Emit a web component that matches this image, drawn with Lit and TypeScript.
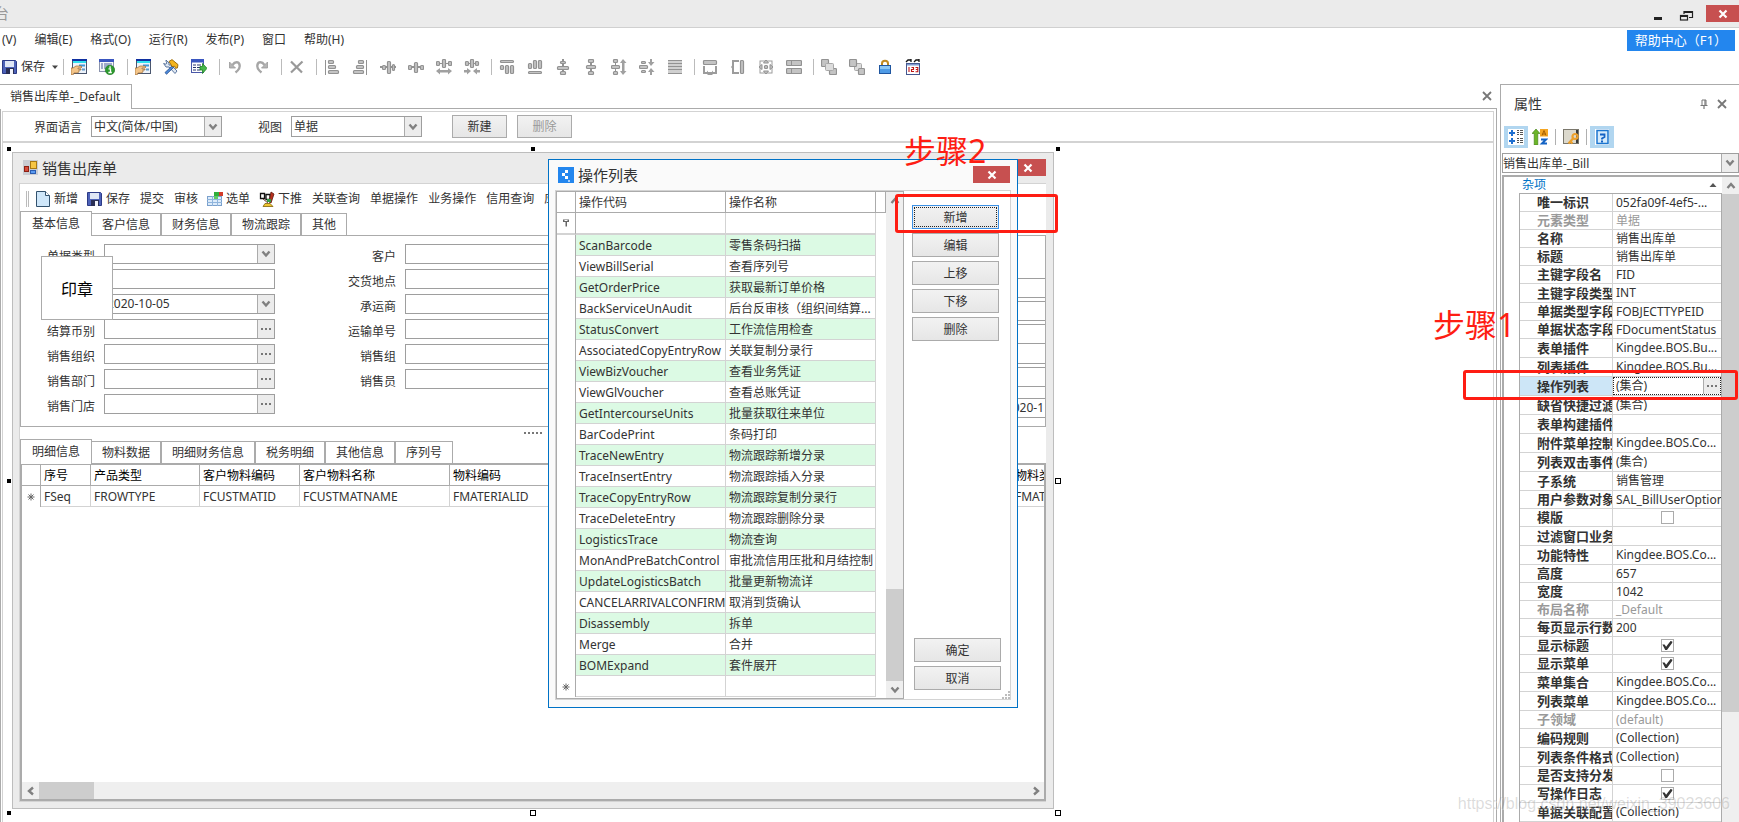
import { LitElement, html, css, svg, nothing, TemplateResult, SVGTemplateResult } from "lit";
import { customElement, property } from "lit/decorators.js";
import { classMap } from "lit/directives/class-map.js";

/* ---------- icon drawings, all on a 16 x 16 grid ---------- */

const g = (x: number, y: number, w: number, h: number) =>
  svg`<rect x=${x + 0.5} y=${y + 0.5} width=${w - 1} height=${h - 1} rx="1" fill="#c4c4c4" stroke="#929292" stroke-width="1.2"/>`;
const bar = (x: number, y: number, w: number, h: number) =>
  svg`<rect x=${x} y=${y} width=${w} height=${h} fill="#929292"/>`;

const formBase = svg`<rect x="1.5" y="0.5" width="14" height="14" fill="#eef3fa" stroke="#4a566e"/>
  <rect x="1" y="0" width="15" height="2" fill="#1030a0"/><rect x="2" y="2" width="13" height="2" fill="#2fe0ee"/>`;

const ICONS: Record<string, SVGTemplateResult> = {
  save: svg`<path d="M0.5 1.5h13l1 1v12h-14z" fill="#4d62b8" stroke="#2c3a86"/><rect x="3" y="2" width="9" height="6" fill="#dfe6f5"/><rect x="4" y="9" width="8" height="6" fill="#2a2f55"/><rect x="8" y="10" width="3" height="5" fill="#f2f4fb"/>`,
  formHand: svg`${formBase}<rect x="8" y="5.500" width="6" height="2" fill="#3f97d8"/><rect x="11" y="9.500" width="3" height="2" fill="#5c9aca"/>
    <path d="M0 9h2l3-2h5l1 1-1 1H7v1h3v1H8v2l-2 1H3l-1 2H0z" fill="#f3c488" stroke="#9a6a38" stroke-width=".7"/>`,
  formInfo: svg`<rect x="0.5" y="0.5" width="14" height="12" fill="#f4f6fa" stroke="#8a93ad"/><rect x="0" y="0" width="15" height="3" fill="#3a56c0"/>
    <path d="M2 5h2M2 7h2M2 9h2M5 5h8M5 7h5M5 9h3" stroke="#4a5f9c"/><circle cx="11" cy="11" r="4.7" fill="#2c9a2e" stroke="#16701a" stroke-width=".6"/><path d="M9.5 9.8h2v3.6M9.4 13.5h3.4" stroke="#fff" stroke-width="1.3" fill="none"/><rect x="10.3" y="7.4" width="1.6" height="1.4" fill="#fff"/>`,
  tools: svg`<path d="M3 1l3 3v2h2l6 6-2 2.5-6-6.500H3L.6 4.500 3 5.200 4 4 3.200 3z" fill="#dfe8f2" stroke="#4d6a96" stroke-width=".9"/>
    <path d="M9 7L2 13.500 3.500 15.300 10.500 8.500z" fill="#4b88d8" stroke="#28508f" stroke-width=".8"/><path d="M6 2.500L9 .6l6 5-.6 3.400-2 .3-.6-2L9 7.600 7.600 5z" fill="#f4b51e" stroke="#946407" stroke-width=".9"/>`,
  formGo: svg`<rect x="0.5" y="0.500" width="12" height="13" fill="#fff" stroke="#4a58a8"/><rect x="0" y="0" width="13" height="3.500" fill="#3a56c0"/>
    <path d="M2 6h3M2 8.500h3M2 11h3M6 6h4M6 8.500h3M6 11h3" stroke="#26356e"/><path d="M9 7.500h2.500V4.500L16 9.300 11.500 14.500V11H9z" fill="#46b749" stroke="#1d7d24" stroke-width=".8"/>`,
  undo: svg`<path d="M2.500 3v6h6z" fill="#b4b4b4" stroke="#9a9a9a" stroke-width=".8"/><path d="M5.500 6C8 2.500 11.500 2.500 12.500 5.500S11 11.500 8.500 13.500" fill="none" stroke="#a6a6a6" stroke-width="2.400"/>`,
  redo: svg`<path d="M13.500 3v6h-6z" fill="#b4b4b4" stroke="#9a9a9a" stroke-width=".8"/><path d="M10.500 6C8 2.500 4.500 2.500 3.500 5.500S5 11.500 7.500 13.500" fill="none" stroke="#a6a6a6" stroke-width="2.400"/>`,
  cross: svg`<path d="M2 2.500l11 11M13.500 2.500L2 13.500" stroke="#999" stroke-width="2.200" fill="none"/>`,
  alLeft: svg`${bar(1, 1, 1, 15)}${g(4, 1, 6, 4)}${g(4, 6, 8, 4)}${g(4, 11, 11, 4)}`,
  alRight: svg`${bar(14, 1, 1, 15)}${g(6, 1, 6, 4)}${g(4, 6, 8, 4)}${g(1, 11, 11, 4)}`,
  alCenterV: svg`${bar(0, 7, 16, 2)}${g(2, 6, 4, 5)}${g(7, 2, 4, 13)}${g(12, 5, 3, 7)}`,
  alMidV: svg`${bar(0, 7, 16, 2)}${g(0, 6, 4, 5)}${g(6, 3, 4, 11)}${g(12, 6, 4, 5)}`,
  spaceH: svg`${bar(0, 4, 16, 1)}${g(0, 2, 4, 5)}${g(6, 0, 4, 9)}${g(12, 2, 4, 5)}<path d="M0 12l4-3v2h8V9l4 3-4 3.500V13.500H4v2z" fill="#a0a0a0"/>`,
  spaceHMin: svg`${bar(1, 4, 14, 1)}${g(1, 2, 4, 5)}${g(6, 0, 4, 9)}${g(11, 2, 4, 5)}<path d="M0 11h3V9l4 3-4 3.500V13.500H0zM16 11h-3V9l-4 3 4 3.500V13.500h3z" fill="#a0a0a0"/>`,
  alTop: svg`${g(1, 1, 14, 3)}${g(1, 6, 4, 5)}${g(6, 6, 4, 9)}${g(11, 6, 4, 9)}`,
  alBottom: svg`${g(1, 12, 14, 3)}${g(1, 4, 4, 6)}${g(6, 1, 4, 9)}${g(11, 1, 4, 9)}`,
  alMidH: svg`${bar(7, 0, 2, 16)}${g(5, 2, 6, 3)}${g(2, 7, 12, 4)}${g(5, 12, 6, 4)}`,
  alMidH2: svg`${bar(7, 0, 2, 16)}${g(5, 0, 6, 4)}${g(3, 6, 10, 4)}${g(5, 12, 6, 4)}`,
  spaceV: svg`${bar(4, 0, 1, 16)}${g(2, 0, 5, 4)}${g(0, 6, 9, 4)}${g(2, 12, 5, 4)}<path d="M12 0l3.500 4H13.500v8H15.500L12 16 9 12h2V4H9z" fill="#a0a0a0"/>`,
  spaceVMin: svg`${g(2, 2, 5, 3)}${g(0, 6, 9, 4)}${g(2, 11, 5, 3)}<path d="M11 0h2v3h2.500L12 7 9 3h2zM11 16h2v-3h2.500L12 9 9 13h2z" fill="#a0a0a0"/>`,
  lines: svg`<rect x="1" y="1" width="14" height="14" fill="#d0d0d0"/>${bar(1, 1, 14, 1)}${bar(1, 4, 14, 1)}${bar(1, 7, 14, 1)}${bar(1, 10, 14, 1)}${bar(1, 14, 14, 1)}`,
  sameW: svg`${g(1, 1, 14, 5)}<path d="M2 7v7h12V7" fill="none" stroke="#9c9c9c" stroke-width="2"/><path d="M4 14l2-2.500v1.500h4v-1.500L12 14l-2 2H6z" fill="#9c9c9c"/>`,
  sameH: svg`${g(10, 1, 4, 14)}<path d="M9 2H3v12h6" fill="none" stroke="#9c9c9c" stroke-width="2"/><path d="M1 8l3-4v8z" fill="#9c9c9c"/>`,
  sameWH: svg`<rect x="2" y="2" width="12" height="12" fill="none" stroke="#9c9c9c"/><path d="M8 1l2.500 3h-5zM8 15l2.500-3h-5zM1 8l3-2.500v5zM15 8l-3-2.500v5z" fill="#c4c4c4" stroke="#929292"/>${g(6, 6, 4, 4)}`,
  cells: svg`${g(0, 1, 16, 6)}${g(0, 9, 16, 6)}${bar(5, 2, 1, 4)}${bar(5, 10, 1, 4)}`,
  front: svg`${g(0, 0, 8, 8)}${g(8, 9, 8, 7)}<rect x="4.500" y="4.500" width="8" height="7" rx="1" fill="#dcdcdc" stroke="#a8a8a8"/>`,
  back: svg`<rect x="5.500" y="4.500" width="7" height="7" rx="1" fill="#dcdcdc" stroke="#a8a8a8"/>${g(0, 0, 8, 8)}${g(9, 9, 7, 7)}`,
  lock: svg`<path d="M5 8V4.500C5 .8 11 .8 11 4.500V8" fill="none" stroke="#c08a24" stroke-width="2"/><rect x="2.500" y="6.500" width="11" height="8" fill="#4f9be6" stroke="#1f56a0"/><rect x="3" y="7" width="10" height="3" fill="#8cc7f7"/>`,
  order: svg`<path d="M1 3l2-2h3M6 0v3M9 3l2-2h3M14 0v3" stroke="#111" stroke-width="1.300" fill="none"/><rect x="1.500" y="4.500" width="13" height="11" fill="#fff" stroke="#44578f"/><rect x="2" y="5" width="12" height="1.500" fill="#7f9ad0"/>
    <path d="M4 8v5M6.500 8.500H8.500V10.500H6.500V12.500H9M10.500 8.500h2.300v4.200h-2.300M10.800 10.500h2" stroke="#c01616" stroke-width="1.100" fill="none"/>`,
  newDoc: svg`<path d="M1.500.5h9l4 4v11h-13z" fill="#cfe7fa" stroke="#33526e"/><path d="M10.500.5v4h4" fill="#fff" stroke="#33526e"/>`,
  pick: svg`<rect x="0.500" y="5.500" width="14" height="9" fill="#dcebfa" stroke="#7aa0cc"/><path d="M0 8.500h15M0 11.500h15M5.500 5v10M10.500 5v10" stroke="#8fb4dc"/><rect x="7" y="1" width="5" height="4" fill="#2fae3b"/><rect x="12" y="1" width="4" height="4" fill="#d23b2a"/><rect x="7" y="5" width="4" height="3" fill="#5ecb64"/>`,
  push: svg`<path d="M1.500 2.500h4v5h-4zM7 3.500h4v5H7z" fill="#fff" stroke="#111" stroke-width="1.300"/><path d="M4 8l5 4M12 1l3 2-3 9-2-1z" fill="#b7301c" stroke="#5e170c" stroke-width=".8"/><path d="M4 15.500l2-3h5l3 3z" fill="#f0c52e" stroke="#806207" stroke-width=".8"/><rect x="8" y="8" width="4" height="3" fill="#33a048"/>`,
  winForm: svg`<rect width="15" height="15" fill="#c9ccd2"/><rect x="7.500" y="1.500" width="6" height="7" fill="#f6c543" stroke="#a87913"/><rect x="1.500" y="6.500" width="4" height="5" fill="#d64b3a" stroke="#8c2013"/><rect x="7.500" y="10.500" width="5" height="3" fill="#5a9af0" stroke="#2a5cb0"/>`,
  bosLogo: svg`<rect width="16" height="16" fill="#2386ee"/><rect x="7" y="3" width="3" height="3" fill="#fff"/><rect x="4" y="6" width="3" height="3" fill="#fff"/><rect x="7" y="9" width="3" height="3" fill="#fff"/><rect x="10" y="13" width="2" height="2" fill="#a6d0ff"/>`,
  category: svg`<rect width="16" height="16" fill="#fff"/><path d="M1 4h6M4 1v6M1 12h6M4 9v6" stroke="#1f6fd0" stroke-width="2"/><path d="M9 1.500h2M9 3.500h2M9 5.500h2M9 9.500h2M9 11.500h2M9 13.500h2M12 1.500h3M12 3.500h3M12 5.500h3M12 9.500h3M12 11.500h3M12 13.500h3" stroke="#555"/>`,
  sortAz: svg`<path d="M4 0l4 4.500H5.800V16H2.200V4.500H0z" fill="#6bb528" stroke="#3d7a10" stroke-width=".6"/><rect x="8" y="0" width="8" height="7.500" fill="#f5a623"/><path d="M10 6.500l2-5 2 5M10.500 5h3" stroke="#a55f00" fill="none"/><rect x="8" y="9" width="8" height="7" fill="#fff"/><path d="M9 10.500h5L10 14.500h5" stroke="#1463c4" stroke-width="2" fill="none"/>`,
  pageKey: svg`<rect x="0.500" y="0.500" width="15" height="14" fill="#dcd9cd" stroke="#7a776c"/><rect x="13" y="1" width="2" height="13" fill="#3a3a3a"/><circle cx="12" cy="7.500" r="2.500" fill="none" stroke="#eda02c" stroke-width="2.200"/><path d="M10 9.500L5.500 14.500M7.500 12.500l2 2" stroke="#eda02c" stroke-width="2.200"/>`,
  helpBook: svg`<rect x="1" y="0" width="14" height="16" fill="#fff"/><path d="M3 1.500h11v13H3z" fill="#d6ebfb" stroke="#1b75cf" stroke-width="1.500"/><path d="M6 5.500h4.500v2.500L8 9.500v1" stroke="#1463c4" stroke-width="1.800" fill="none"/><rect x="7" y="11.500" width="2" height="2" fill="#1463c4"/>`,
  pin: svg`<path d="M6 4h4v5.500H6z" fill="#fff" stroke="#777"/><path d="M9 4v5.500M4.500 9.500h7M8 10v3" stroke="#777" stroke-width="1.200"/>`,
  close: svg`<path d="M4 4l8 8M12 4l-8 8" stroke="#777" stroke-width="1.800"/>`,
  closeW: svg`<path d="M4.500 4.500l7 7M11.500 4.500l-7 7" stroke="#fff" stroke-width="2.200"/>`,
  min: svg`<rect x="4" y="9" width="8" height="3" fill="#222"/>`,
  restore: svg`<path d="M6 6V3.500h8.500v6H11" stroke="#222" fill="none" stroke-width="1.200"/><rect x="6" y="3" width="9" height="2" fill="#222"/><rect x="2.500" y="7.500" width="7" height="4.500" stroke="#222" fill="none" stroke-width="1.200"/><rect x="2" y="7" width="8" height="2" fill="#222"/>`,
  chevDown: svg`<path d="M4.500 5.500L8 9.500l3.500-4" stroke="#808080" stroke-width="2.400" fill="none"/>`,
  chevUp: svg`<path d="M4.500 10L8 6l3.500 4" stroke="#808080" stroke-width="2.400" fill="none"/>`,
  chevLeft: svg`<path d="M10 4.500L6 8l4 3.500" stroke="#808080" stroke-width="2.400" fill="none"/>`,
  chevRight: svg`<path d="M6 4.500L10 8l-4 3.500" stroke="#808080" stroke-width="2.400" fill="none"/>`,
  dots: svg`<path d="M3 7h2v2H3zM7 7h2v2H7zM11 7h2v2h-2z" fill="#777"/>`,
  triUp: svg`<path d="M8 6l3.500 4h-7z" fill="#555"/>`,
  triDown: svg`<path d="M5 6.500h6L8 10z" fill="#444"/>`,
  star: svg`<path d="M8 4.500v7M4.500 8h7M5.500 5.500l5 5M10.500 5.500l-5 5" stroke="#666"/>`,
  filter: svg`<path d="M5 4.500h6v2.500H9v4.500H7.500V7H5z" fill="#666"/><rect x="6.500" y="5" width="3" height="1" fill="#fff"/>`,
};

const icon = (name: string, cls = "ic") =>
  html`<svg class=${cls} viewBox="0 0 16 16" aria-hidden="true">${ICONS[name]}</svg>`;

/* ---------- data ---------- */

const MENU = ["(V)", "编辑(E)", "格式(O)", "运行(R)", "发布(P)", "窗口", "帮助(H)"];

type Tool = [string, string] | null;
const TOOLS_A: Tool[] = [["formHand", "表单"], ["formInfo", "信息"], null, ["formHand", "向导"], ["tools", "工具"], ["formGo", "导出"], null];
const TOOLS_B: Tool[] = [["undo", "撤销"], ["redo", "重做"], null, ["cross", "清除"], null];
const TOOLS_C: Tool[] = [
  ["alLeft", "左对齐"], ["alRight", "右对齐"], ["alCenterV", "居中"], ["alMidV", "等距"], ["spaceH", "增加间距"], ["spaceHMin", "减少间距"], null,
  ["alTop", "顶端对齐"], ["alBottom", "底端对齐"], ["alMidH", "水平居中"], ["alMidH2", "水平等距"], ["spaceV", "增加垂直间距"], ["spaceVMin", "减少垂直间距"], ["lines", "行"], null,
  ["sameW", "同宽"], ["sameH", "同高"], ["sameWH", "同大小"], ["cells", "单元"], null,
  ["front", "置前"], ["back", "置后"], ["lock", "锁定"], ["order", "顺序"],
];

const OPERATIONS: [string, string][] = [
  ["ScanBarcode", "零售条码扫描"],
  ["ViewBillSerial", "查看序列号"],
  ["GetOrderPrice", "获取最新订单价格"],
  ["BackServiceUnAudit", "后台反审核（组织间结算..."],
  ["StatusConvert", "工作流信用检查"],
  ["AssociatedCopyEntryRow", "关联复制分录行"],
  ["ViewBizVoucher", "查看业务凭证"],
  ["ViewGlVoucher", "查看总账凭证"],
  ["GetIntercourseUnits", "批量获取往来单位"],
  ["BarCodePrint", "条码打印"],
  ["TraceNewEntry", "物流跟踪新增分录"],
  ["TraceInsertEntry", "物流跟踪插入分录"],
  ["TraceCopyEntryRow", "物流跟踪复制分录行"],
  ["TraceDeleteEntry", "物流跟踪删除分录"],
  ["LogisticsTrace", "物流查询"],
  ["MonAndPreBatchControl", "审批流信用压批和月结控制"],
  ["UpdateLogisticsBatch", "批量更新物流详"],
  ["CANCELARRIVALCONFIRM", "取消到货确认"],
  ["Disassembly", "拆单"],
  ["Merge", "合并"],
  ["BOMExpand", "套件展开"],
];

interface Prop { n: string; v?: string; check?: boolean; tall?: boolean; off?: boolean; sel?: boolean }
const PROPS: Prop[] = [
  { n: "唯一标识", v: "052fa09f-4ef5-..." },
  { n: "元素类型", v: "单据", off: true },
  { n: "名称", v: "销售出库单" },
  { n: "标题", v: "销售出库单" },
  { n: "主键字段名", v: "FID" },
  { n: "主键字段类型", v: "INT", tall: true },
  { n: "单据类型字段", v: "FOBJECTTYPEID" },
  { n: "单据状态字段", v: "FDocumentStatus" },
  { n: "表单插件", v: "Kingdee.BOS.Bu...", tall: true },
  { n: "列表插件", v: "Kingdee.BOS.Bu...", tall: true },
  { n: "操作列表", v: "(集合)", tall: true, sel: true },
  { n: "缺省快捷过滤", v: "(集合)", tall: true },
  { n: "表单构建插件", tall: true },
  { n: "附件菜单控制", v: "Kingdee.BOS.Co...", tall: true },
  { n: "列表双击事件", v: "(集合)", tall: true },
  { n: "子系统", v: "销售管理", tall: true },
  { n: "用户参数对象", v: "SAL_BillUserOption" },
  { n: "模版", check: false },
  { n: "过滤窗口业务", tall: true },
  { n: "功能特性", v: "Kingdee.BOS.Co...", tall: true },
  { n: "高度", v: "657" },
  { n: "宽度", v: "1042" },
  { n: "布局名称", v: "_Default", off: true },
  { n: "每页显示行数", v: "200" },
  { n: "显示标题", check: true },
  { n: "显示菜单", check: true },
  { n: "菜单集合", v: "Kingdee.BOS.Co...", tall: true },
  { n: "列表菜单", v: "Kingdee.BOS.Co...", tall: true },
  { n: "子领域", v: "(default)", off: true },
  { n: "编码规则", v: "(Collection)", tall: true },
  { n: "列表条件格式", v: "(Collection)", tall: true },
  { n: "是否支持分发", check: false },
  { n: "写操作日志", check: true },
  { n: "单据关联配置", v: "(Collection)", tall: true },
];

/* ---------- shared look ---------- */

const base = css`
  *, *::before, *::after { box-sizing: border-box; }
  button, input, select { font: inherit; color: inherit; margin: 0; padding: 0; border: 0; border-radius: 0; background: none; outline: none; }
  table { border-collapse: separate; border-spacing: 0; table-layout: fixed; }
  th, td { padding: 0; font-weight: normal; text-align: left; white-space: nowrap; overflow: hidden; }
  .ic { width: 16px; height: 16px; display: block; flex: none; }
  .btn { height: 24px; padding-top: 2px; background: linear-gradient(#f2f2f2, #e6e6e6); border: 1px solid #ababab; display: block; text-align: center; }
  .red { background: #c75050; display: flex; align-items: center; justify-content: center; flex: none; }
  .combo { display: flex; border: 1px solid #9e9e9e; background: #fff; position: relative; min-width: 0; }
  .combo select, .combo input { flex: 1; min-width: 0; appearance: none; padding-left: 2px; }
  .combo .end { width: 17px; flex: none; background: #ececec; border-left: 1px solid #ababab; display: flex; align-items: center; justify-content: center; overflow: hidden; }
  select + .end { pointer-events: none; }
  .sb { background: #efefef; display: flex; flex: none; }
  .sb button { display: flex; align-items: center; justify-content: center; width: 17px; height: 17px; flex: none; }
  .thumb { background: #cdcdcd; }
`;

/* ---------- property panel ---------- */

@customElement("property-panel")
export class PropertyPanel extends LitElement {
  static styles = [base, css`
    :host { display: flex; flex-direction: column; border-left: 1px solid #ababab; border-top: 1px solid #ababab; background: #fff; overflow: hidden; min-width: 0; }
    .head { display: flex; align-items: center; height: 37px; padding: 0 9px 0 13px; flex: none; }
    .head h2 { font-size: 14px; font-weight: normal; margin: 0; flex: 1; line-height: 20px; color: #333; }
    .head button + button { margin-left: 2px; }
    .bar { display: flex; align-items: center; height: 30px; padding-left: 3px; margin-bottom: 1px; flex: none; }
    .bar button { width: 24px; height: 22px; display: flex; align-items: center; justify-content: center; }
    .bar .on { background: #b1d6f0; }
    .bar .sep { width: 1px; height: 16px; background: #b0b0b0; margin: 0 3px; }
    .combo { height: 20px; margin-left: 1px; flex: none; }
    .combo select { padding-left: 0; }
    .grid { flex: 1; min-height: 0; display: flex; margin: 2px 0 0 1px; border-left: 2px solid #ababab; border-top: 2px solid #ababab; overflow: hidden; }
    .main { flex: 1; min-width: 0; }
    .cat { height: 16px; display: flex; align-items: center; justify-content: space-between; padding: 0 1px 0 18px; color: #0072c6; }
    .rows { margin-left: 15px; width: calc(100% - 15px); border: 1px solid #ababab; border-width: 1px 1px 0 1px; }
    td, th { height: 18px; line-height: 17px; border-bottom: 1px solid #d3d3d3; }
    .tall td, .tall th { height: 19px; line-height: 18px; }
    th { font-weight: bold; font-size: 13px; padding-left: 17px; border-right: 1px solid #d3d3d3; width: 93px; color: #333; text-overflow: clip; }
    td { padding-left: 3px; }
    .off th, .off td { color: #999; }
    .sel th { background: #cde6f7; }
    .sel td { padding: 0; }
    .edit { display: flex; height: 18px; border: 1px dotted #222; padding-left: 2px; line-height: 16px; }
    .edit input { flex: 1; min-width: 0; }
    .edit button { width: 17px; background: #ececec; border-left: 1px solid #ababab; display: flex; align-items: center; overflow: hidden; }
    .chk { text-align: center; padding: 0; }
    .chk input { appearance: none; width: 13px; height: 13px; border: 1px solid #ababab; background: #fff; display: block; margin: 0 auto; }
    .chk input:checked::before { content: ""; display: block; width: 11px; height: 11px; background: #333; clip-path: polygon(8% 42%, 28% 42%, 42% 62%, 82% 10%, 98% 14%, 98% 24%, 50% 90%, 34% 90%); }
    .sb { width: 17px; flex-direction: column; }
    .sb .thumb { height: 518px; }
  `];

  render() {
    return html`
      <div class="head"><h2>属性</h2>
        <button aria-label="固定">${icon("pin")}</button><button aria-label="关闭">${icon("close")}</button></div>
      <div class="bar">
        <button class="on" aria-label="分类">${icon("category")}</button>
        <button aria-label="排序">${icon("sortAz")}</button><span class="sep"></span>
        <button aria-label="权限">${icon("pageKey")}</button><span class="sep"></span>
        <button class="on" aria-label="说明">${icon("helpBook")}</button>
      </div>
      <div class="combo"><select aria-label="对象"><option>销售出库单-_Bill</option></select><span class="end">${icon("chevDown")}</span></div>
      <div class="grid">
        <div class="main">
          <div class="cat"><span>杂项</span>${icon("triUp")}</div>
          <table class="rows"><tbody>${PROPS.map((p) => this.row(p))}</tbody></table>
        </div>
        <div class="sb"><button aria-label="向上">${icon("chevUp")}</button><div class="thumb"></div></div>
      </div>`;
  }

  private row(p: Prop): TemplateResult {
    const cls = classMap({ tall: !!p.tall, off: !!p.off, sel: !!p.sel });
    let cell = html`<td>${p.v ?? nothing}</td>`;
    if (p.check !== undefined) cell = html`<td class="chk"><input type="checkbox" aria-label=${p.n} .checked=${p.check}></td>`;
    if (p.sel) cell = html`<td><div class="edit"><input aria-label=${p.n} .value=${p.v ?? ""}><button aria-label="浏览">${icon("dots")}</button></div></td>`;
    return html`<tr class=${cls}><th scope="row">${p.n}</th>${cell}</tr>`;
  }
}

/* ---------- bill form on the design surface ---------- */

@customElement("bill-form")
export class BillForm extends LitElement {
  static styles = [base, css`
    :host { display: flex; flex-direction: column; background: #ebebeb; border: 1px solid #bdbdbd; padding: 0 7px 6px 6px; }
    .title { display: flex; align-items: center; height: 30px; padding-left: 4px; flex: none; }
    .title h2 { flex: 1; margin: 0; padding-left: 3px; font-size: 15px; line-height: 20px; font-weight: normal; color: #333; }
    .title .red { width: 36px; height: 17px; align-self: flex-start; margin-top: 6px; }
    .body { flex: 1; min-height: 0; display: flex; flex-direction: column; background: #fff; border: 1px solid #d3d3d3; border-right-width: 0; position: relative; }
    .tools { height: 27px; display: flex; align-items: center; padding: 3px 0 0 6px; gap: 10px; overflow: hidden; flex: none; }
    .grip { width: 3px; height: 16px; border: 1px solid #bbb; border-width: 0 1px; flex: none; margin-right: -3px; }
    .tools button { display: flex; align-items: center; gap: 3px; flex: none; white-space: nowrap; }
    .tools button .ic { margin-left: -1px; }
    .tabs { display: flex; align-items: flex-end; height: 24px; flex: none; position: relative; z-index: 1; }
    .tab { height: 22px; border: 1px solid #ababab; border-bottom: 0; padding: 1px 10px 0; background: #fff; white-space: nowrap; flex: none; }
    .tab.on { height: 25px; padding: 0 11px; margin: 0 -1px -1px 0; z-index: 1; line-height: 22px; }
    .panel { height: 192px; border: 1px solid #ababab; padding-top: 8px; display: flex; flex: none; overflow: hidden; }
    .col { display: grid; grid-auto-rows: 20px; row-gap: 5px; column-gap: 9px; align-content: start; }
    .c1 { grid-template-columns: 74px 171px; }
    .c2 { grid-template-columns: 121px 171px; }
    .c3 { margin: 34px -1px 0 auto; width: 171px; display: flex; flex-direction: column; }
    .col label { text-align: right; padding-top: 3px; white-space: nowrap; }
    .box { height: 20px; border: 1px solid #9e9e9e; background: #fff; padding: 0 3px; flex: none; }
    .c3 .box { margin-bottom: 3px; width: 171px; text-align: right; padding: 0 1px; }
    .c3 .flat { border-top: 0; margin-top: -3px; }
    .c3 .last { margin-top: 8px; }
    .split { height: 12px; flex: none; display: flex; justify-content: center; align-items: center; gap: 2px; }
    .split i { width: 2px; height: 2px; background: #777; }
    .grid { flex: 1; min-height: 0; border: 2px solid #ababab; display: flex; flex-direction: column; overflow: hidden; }
    .rows { flex: 1; min-height: 0; overflow: hidden; }
    .rows table { width: 1100px; }
    th { height: 21px; line-height: 18px; border-bottom: 1px solid #ababab; border-right: 1px solid #ababab; padding: 2px 0 0 3px; color: #000; }
    td { height: 21px; line-height: 18px; border-bottom: 1px solid #d3d3d3; border-right: 1px solid #d3d3d3; padding: 2px 0 0 3px; }
    .ind { padding: 0 0 0 1px; }
    td.ind { border-bottom: 0; border-right-color: #ababab; }
    .sb { height: 17px; }
    .sb .thumb { width: 55px; margin-right: auto; }
    .seal { position: absolute; left: 21px; top: 72px; width: 72px; height: 64px; border: 1px solid #ababab; background: #fff; color: #000; font-size: 16px; line-height: 64px; text-align: center; z-index: 2; }
  `];

  private combo(id: string, end: string, value = "") {
    return html`<span class="combo"><input id=${id} .value=${value}><button class="end" aria-label="选择">${icon(end)}</button></span>`;
  }

  private tabs(names: string[]) {
    return html`<div class="tabs" role="tablist">${names.map((n, i) => html`<button role="tab" class=${classMap({ tab: true, on: i === 0 })}>${n}</button>`)}</div>`;
  }

  render() {
    const left: [string, string, string][] = [
      ["单据类型", "chevDown", ""], ["单据编号", "", ""], ["日期", "chevDown", "2020-10-05"],
      ["结算币别", "dots", ""], ["销售组织", "dots", ""], ["销售部门", "dots", ""], ["销售门店", "dots", ""],
    ];
    const mid = ["客户", "交货地点", "承运商", "运输单号", "销售组", "销售员"];
    const tools: [string, string][] = [["newDoc", "新增"], ["save", "保存"], ["", "提交"], ["", "审核"], ["pick", "选单"], ["push", "下推"],
      ["", "关联查询"], ["", "单据操作"], ["", "业务操作"], ["", "信用查询"], ["", "应收"]];
    return html`
      <div class="title">${icon("winForm")}<h2>销售出库单</h2><button class="red" aria-label="关闭">${icon("closeW")}</button></div>
      <div class="body">
        <div class="tools"><span class="grip"></span>${tools.map(([i, t]) => html`<button>${i ? icon(i) : nothing}${t}</button>`)}</div>
        ${this.tabs(["基本信息", "客户信息", "财务信息", "物流跟踪", "其他"])}
        <div class="panel">
          <div class="col c1">${left.map(([n, end, v], i) => html`<label for="l${i}">${n}</label>${end ? this.combo("l" + i, end, v) : html`<input class="box" id="l${i}">`}`)}</div>
          <div class="col c2">${mid.map((n, i) => html`<label for="m${i}">${n}</label><input class="box" id="m${i}">`)}</div>
          <div class="c3">
            <input class="box" aria-label="备注"><input class="box" aria-label="地址"><input class="box" aria-label="电话">
            <input class="box flat" aria-label="组织"><input class="box" aria-label="部门"><input class="box last" aria-label="起始" .value=${"2020-1"}>
          </div>
        </div>
        <div class="split"><i></i><i></i><i></i><i></i><i></i></div>
        ${this.tabs(["明细信息", "物料数据", "明细财务信息", "税务明细", "其他信息", "序列号"])}
        <div class="grid">
          <div class="rows"><table>
            <colgroup><col style="width:19px"><col style="width:50px"><col style="width:109px"><col style="width:100px"><col style="width:150px"><col style="width:562px"><col></colgroup>
            <thead><tr><th class="ind"></th><th>序号</th><th>产品类型</th><th>客户物料编码</th><th>客户物料名称</th><th>物料编码</th><th>物料类型</th></tr></thead>
            <tbody><tr><td class="ind">${icon("star")}</td><td>FSeq</td><td>FROWTYPE</td><td>FCUSTMATID</td><td>FCUSTMATNAME</td><td>FMATERIALID</td><td>FMATERIALTYPE</td></tr></tbody>
          </table></div>
          <div class="sb"><button aria-label="向左">${icon("chevLeft")}</button><div class="thumb"></div><button aria-label="向右">${icon("chevRight")}</button></div>
        </div>
        <div class="seal">印章</div>
      </div>`;
  }
}

/* ---------- operation list dialog ---------- */

@customElement("operation-dialog")
export class OperationDialog extends LitElement {
  @property({ attribute: false }) rows: [string, string][] = OPERATIONS;

  static styles = [base, css`
    :host { display: flex; flex-direction: column; background: #fafafa; border: 1px solid #0072c6; padding: 0 6px 7px 6px; }
    .title { display: flex; align-items: center; height: 30px; padding-left: 3px; flex: none; }
    .title h2 { flex: 1; margin: 0; padding-left: 4px; font-size: 15px; line-height: 20px; font-weight: normal; color: #333; }
    .title .red { width: 37px; height: 17px; align-self: flex-start; margin: 6px 1px 0 0; }
    .body { flex: 1; min-height: 0; display: flex; background: #fff; border: 1px solid #d3d3d3; }
    .grid { width: 348px; border: 1px solid #ababab; display: flex; flex: none; overflow: hidden; }
    .rows { flex: 1; min-width: 0; overflow: hidden; }
    table { width: 100%; }
    th, td { height: 21px; line-height: 18px; border-right: 1px solid #d3d3d3; border-bottom: 1px solid #d3d3d3; padding: 2px 0 0 3px; }
    th { border-color: #ababab; }
    .ind { padding: 0 0 0 1px; border-right-color: #ababab; border-bottom: 0; }
    th.ind { border-bottom: 1px solid #ababab; }
    .filter td { height: 22px; border-bottom: 2px solid #d3d3d3; }
    .filter td.ind { border-right-color: #ababab; }
    .filter td.stub { border: 0; }
    .filter input { width: 100%; height: 16px; display: block; }
    td.stub { border: 0; }
    .green .v { background: #dcfae4; }
    .sb { width: 17px; flex-direction: column; }
    .sb .thumb { height: 92px; margin-top: auto; }
    .side { flex: 1; display: flex; flex-direction: column; padding: 14px 11px 9px 8px; position: relative; }
    .side .btn + .btn { margin-top: 4px; }
    .side .gap { flex: 1; }
    .side .low { margin: 0 -2px 0 2px; }
    .focus { border-color: #3c91e6; outline: 1px dotted #222; outline-offset: -3px; }
    .size { position: absolute; right: 0; bottom: 0; width: 9px; height: 9px; }
  `];

  render() {
    return html`
      <div class="title">${icon("bosLogo")}<h2>操作列表</h2><button class="red" aria-label="关闭">${icon("closeW")}</button></div>
      <div class="body">
        <div class="grid">
          <div class="rows"><table>
            <colgroup><col style="width:19px"><col style="width:150px"><col style="width:150px"><col></colgroup>
            <thead><tr><th class="ind"></th><th>操作代码</th><th>操作名称</th><th></th></tr></thead>
            <tbody>
              <tr class="filter"><td class="ind">${icon("filter")}</td><td><input aria-label="筛选代码"></td><td><input aria-label="筛选名称"></td><td class="stub"></td></tr>
              ${this.rows.map(([c, n], i) => html`<tr class=${classMap({ green: i % 2 === 0 })}><td class="ind"></td><td class="v">${c}</td><td class="v">${n}</td><td class="stub"></td></tr>`)}
              <tr><td class="ind">${icon("star")}</td><td></td><td></td><td class="stub"></td></tr>
            </tbody>
          </table></div>
          <div class="sb"><button aria-label="向上">${icon("chevUp")}</button><div class="thumb"></div><button aria-label="向下">${icon("chevDown")}</button></div>
        </div>
        <div class="side">
          <button class="btn focus">新增</button><button class="btn">编辑</button><button class="btn">上移</button><button class="btn">下移</button><button class="btn">删除</button>
          <span class="gap"></span>
          <button class="btn low">确定</button><button class="btn low">取消</button>
          <svg class="size" viewBox="0 0 9 9" aria-hidden="true"><path d="M7 1h2v2H7zM4 4h2v2H4zM7 4h2v2H7zM1 7h2v2H1zM4 7h2v2H4zM7 7h2v2H7z" fill="#bdbdbd"/></svg>
        </div>
      </div>`;
  }
}

/* ---------- application window ---------- */

@customElement("app-root")
export class AppRoot extends LitElement {
  static styles = [base, css`
    :host { display: flex; flex-direction: column; position: relative; width: 100%; height: 100vh; overflow: hidden; background: #fff; color: #333;
      font: 12px/20px "Noto Sans", "Noto Sans CJK SC", sans-serif; }
    .titlebar { height: 28px; background: #ebebeb; border-bottom: 1px solid #d0d0d0; display: flex; justify-content: space-between; flex: none; overflow: hidden; }
    .titlebar span { font-size: 15px; line-height: 26px; color: #999; margin-left: -6px; }
    .wins { display: flex; gap: 12px; padding-top: 5px; }
    .wins .red { width: 33px; height: 17px; }
    .menubar { display: flex; justify-content: space-between; align-items: flex-start; height: 26px; padding: 2px 4px 0 2px; flex: none; }
    nav { display: flex; gap: 18px; }
    nav button { line-height: 20px; display: block; }
    .help { background: #2386ee; color: #fff; height: 21px; padding: 0 8px; font-size: 13px; line-height: 20px; text-decoration: none; white-space: nowrap; }
    .toolbar { display: flex; height: 26px; align-items: center; flex: none; }
    .tsave { display: flex; align-items: center; width: 57px; padding-left: 2px; gap: 3px; white-space: nowrap; flex: none; }
    .drop { width: 16px; height: 16px; margin-left: -1px; flex: none; }
    .tb { width: 28px; height: 24px; display: flex; align-items: center; justify-content: center; flex: none; }
    .narrow .tb { width: 27px; }
    .group { display: flex; align-items: center; flex: none; }
    .sep { width: 7px; height: 16px; flex: none; border-right: 1px solid #bbb; margin-right: 1px; }
    .wide .sep { width: 6px; }
    .work { flex: 1; min-height: 0; display: flex; margin-top: 4px; }
    .left { flex: 1; min-width: 0; display: flex; flex-direction: column; }
    .doctabs { display: flex; justify-content: space-between; height: 24px; flex: none; }
    .doctab { border: 1px solid #ababab; border-width: 1px 1px 0 0; background: #fff; height: 25px; padding: 0 11px 0 10px; position: relative; z-index: 1; }
    .doctabs .x { align-self: center; margin-right: 2px; }
    .frame { flex: 1; min-height: 0; border: 1px solid #ababab; border-bottom: 0; padding: 2px 2px 0 1px; display: flex; }
    .inner { flex: 1; min-width: 0; border: 1px solid #d3d3d3; border-bottom: 0; display: flex; flex-direction: column; }
    .opts { height: 31px; border-bottom: 2px solid #d3d3d3; display: flex; align-items: center; padding-left: 31px; flex: none; }
    .opts label { padding-top: 2px; margin-right: 9px; }
    .opts .combo { width: 131px; height: 21px; }
    .opts .second { margin-left: 36px; }
    .opts .btn { width: 55px; height: 23px; margin-left: 10px; padding-top: 1px; }
    .opts .firstbtn { margin-left: 30px; }
    .btn:disabled { color: #999; }
    .canvas { flex: 1; min-height: 0; position: relative; overflow: hidden; }
    .design { position: absolute; left: 9px; top: 9px; width: 1042px; height: 657px; }
    .design bill-form { width: 100%; height: 100%; }
    .h { position: absolute; width: 4px; height: 4px; background: #000; margin: -2px; }
    .h.o { width: 6px; height: 6px; margin: -3px; background: #fff; border: 1px solid #000; }
    .n { top: -3px; } .s { bottom: -4px; } .w { left: -3px; } .e { right: -4px; } .mx { left: 50%; } .my { top: 50%; }
    property-panel { width: 239px; margin-left: 3px; flex: none; }
    operation-dialog { position: absolute; left: 548px; top: 159px; width: 470px; height: 549px; }
    .mark { position: absolute; border: 3px solid #fe1d13; border-radius: 3px; pointer-events: none; }
    .m1 { right: 1px; top: 370px; width: 275px; height: 30px; }
    .m2 { left: 895px; top: 194px; width: 163px; height: 39px; }
    .step { position: absolute; color: #fe1d13; font-size: 32px; line-height: 40px; white-space: nowrap; }
    .s1 { left: 1433px; top: 305px; }
    .s2 { left: 904px; top: 131px; }
    .wm { position: absolute; right: 9px; bottom: 8px; font: 16px/20px "Liberation Sans", sans-serif; color: rgba(130, 130, 130, 0.28); text-shadow: 1px 1px 0 rgba(255, 255, 255, 0.4); pointer-events: none; }
  `];

  private tools(list: Tool[]) {
    return list.map((t) => (t ? html`<button class="tb" aria-label=${t[1]}>${icon(t[0])}</button>` : html`<span class="sep"></span>`));
  }

  render() {
    return html`
      <div class="titlebar"><span>台</span>
        <div class="wins"><button aria-label="最小化">${icon("min")}</button><button aria-label="还原">${icon("restore")}</button><button class="red" aria-label="关闭">${icon("closeW")}</button></div>
      </div>
      <div class="menubar"><nav>${MENU.map((m) => html`<button>${m}</button>`)}</nav><a class="help" href="#">帮助中心（F1）</a></div>
      <div class="toolbar">
        <button class="tsave">${icon("save")}保存${icon("triDown", "drop")}</button><span class="sep"></span>
        <div class="group">${this.tools(TOOLS_A)}</div><div class="group narrow">${this.tools(TOOLS_B)}</div><div class="group wide">${this.tools(TOOLS_C)}</div>
      </div>
      <div class="work">
        <div class="left">
          <div class="doctabs"><button class="doctab">销售出库单-_Default</button><button class="x" aria-label="关闭">${icon("close")}</button></div>
          <div class="frame"><div class="inner">
            <div class="opts">
              <label for="lang">界面语言</label><span class="combo"><select id="lang"><option>中文(简体/中国)</option></select><span class="end">${icon("chevDown")}</span></span>
              <label class="second" for="view">视图</label><span class="combo"><select id="view"><option>单据</option></select><span class="end">${icon("chevDown")}</span></span>
              <button class="btn firstbtn">新建</button><button class="btn" disabled>删除</button>
            </div>
            <div class="canvas"><div class="design">
              <bill-form></bill-form>
              <span class="h n w"></span><span class="h n mx"></span><span class="h n e"></span>
              <span class="h w my"></span><span class="h o e my"></span>
              <span class="h s w"></span><span class="h o s mx"></span><span class="h o s e"></span>
            </div></div>
          </div></div>
        </div>
        <property-panel></property-panel>
      </div>
      <operation-dialog></operation-dialog>
      <div class="mark m1"></div><div class="mark m2"></div>
      <div class="step s1">步骤1</div><div class="step s2">步骤2</div>
      <div class="wm">https://blog.csdn.net/weixin_39023606</div>`;
  }
}
